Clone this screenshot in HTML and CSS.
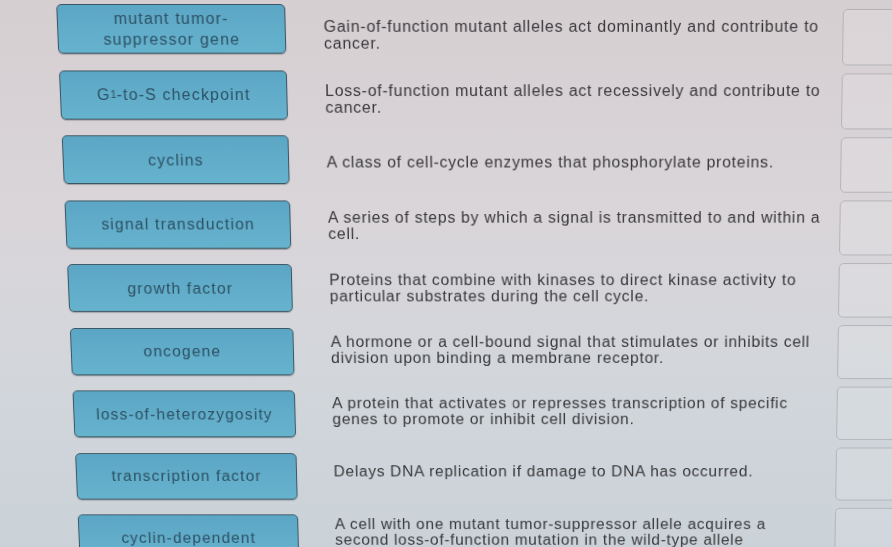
FILE: index.html
```html
<!DOCTYPE html>
<html lang="en">
<head>
<meta charset="UTF-8">
<meta name="viewport" content="width=device-width, initial-scale=1.0">
<title>Tumor suppressors and oncogenes - matching</title>
<link rel="stylesheet" href="styles.css">
</head>

<body>
    <div class="sheet">
        <!-- draggable answer labels -->
        <div class="labels">
            <div class="label">mutant tumor-<br>suppressor gene</div>
            <div class="label">G<sub>1</sub>-to-S checkpoint</div>
            <div class="label">cyclins</div>
            <div class="label">signal transduction</div>
            <div class="label">growth factor</div>
            <div class="label">oncogene</div>
            <div class="label">loss-of-heterozygosity</div>
            <div class="label">transcription factor</div>
            <div class="label">cyclin-dependent</div>
        </div>

        <!-- definitions with their drop targets -->
        <div class="pairs">
            <div class="pair">
                <p class="def">Gain-of-function mutant alleles act dominantly and contribute to cancer.</p>
                <div class="target"></div>
            </div>
            <div class="pair">
                <p class="def">Loss-of-function mutant alleles act recessively and contribute to cancer.</p>
                <div class="target"></div>
            </div>
            <div class="pair">
                <p class="def">A class of cell-cycle enzymes that phosphorylate proteins.</p>
                <div class="target"></div>
            </div>
            <div class="pair">
                <p class="def">A series of steps by which a signal is transmitted to and within a cell.</p>
                <div class="target"></div>
            </div>
            <div class="pair">
                <p class="def">Proteins that combine with kinases to direct kinase activity to particular substrates during the cell cycle.</p>
                <div class="target"></div>
            </div>
            <div class="pair">
                <p class="def">A hormone or a cell-bound signal that stimulates or inhibits cell division upon binding a membrane receptor.</p>
                <div class="target"></div>
            </div>
            <div class="pair">
                <p class="def">A protein that activates or represses transcription of specific genes to promote or inhibit cell division.</p>
                <div class="target"></div>
            </div>
            <div class="pair">
                <p class="def">Delays DNA replication if damage to DNA has occurred.</p>
                <div class="target"></div>
            </div>
            <div class="pair">
                <p class="def">A cell with one mutant tumor-suppressor allele acquires a second loss-of-function mutation in the wild-type allele</p>
                <div class="target"></div>
            </div>
        </div>
    </div>
</body>

</html>
```

FILE: styles.css
```css
html,
body {
    margin: 0;
    height: 100%;
    overflow: hidden;
}

body {
    font-family: "Liberation Sans", Arial, sans-serif;
    background: linear-gradient(180deg, #d6cfd2 0%, #d9d5d9 40%, #d2d6db 70%, #cad2d8 100%);
}

/* whole sheet leans back a little */
.sheet {
    display: flex;
    align-items: flex-start;
    width: 960px;
    transform-origin: 630px 0;
    transform: perspective(1000px) rotateX(-4.2deg);
}

.labels {
    display: flex;
    flex-direction: column;
    gap: 16.5px;
    width: 229px;
    margin-left: 56px;
    padding-top: 4px;
}

.label {
    box-sizing: border-box;
    height: 50px;
    display: flex;
    align-items: center;
    justify-content: center;
    text-align: center;
    background: linear-gradient(180deg, #5ca6c5, #66b3ce);
    border: 1.5px solid #3b5663;
    border-radius: 5px;
    box-shadow: 0 1px 1px rgba(40, 60, 70, 0.35);
    color: #2d5063;
    font-size: 16px;
    line-height: 21px;
    letter-spacing: 1.2px;
}

.label sub {
    font-size: 11px;
    letter-spacing: 0;
    vertical-align: -1px;
}

.pairs {
    margin-left: 38px;
    padding-top: 5px;
}

.pair {
    display: grid;
    grid-template-columns: 520px 80px;
    align-items: center;
    height: 65px;
}

.def {
    margin: 0 0 6px;
    width: 502px;
    font-size: 16px;
    line-height: 17px;
    letter-spacing: 0.75px;
    color: #38383a;
}

.target {
    box-sizing: border-box;
    height: 57px;
    border: 1px solid #b3b3b7;
    border-radius: 5px;
    background: rgba(255, 255, 255, 0.12);
}
```
